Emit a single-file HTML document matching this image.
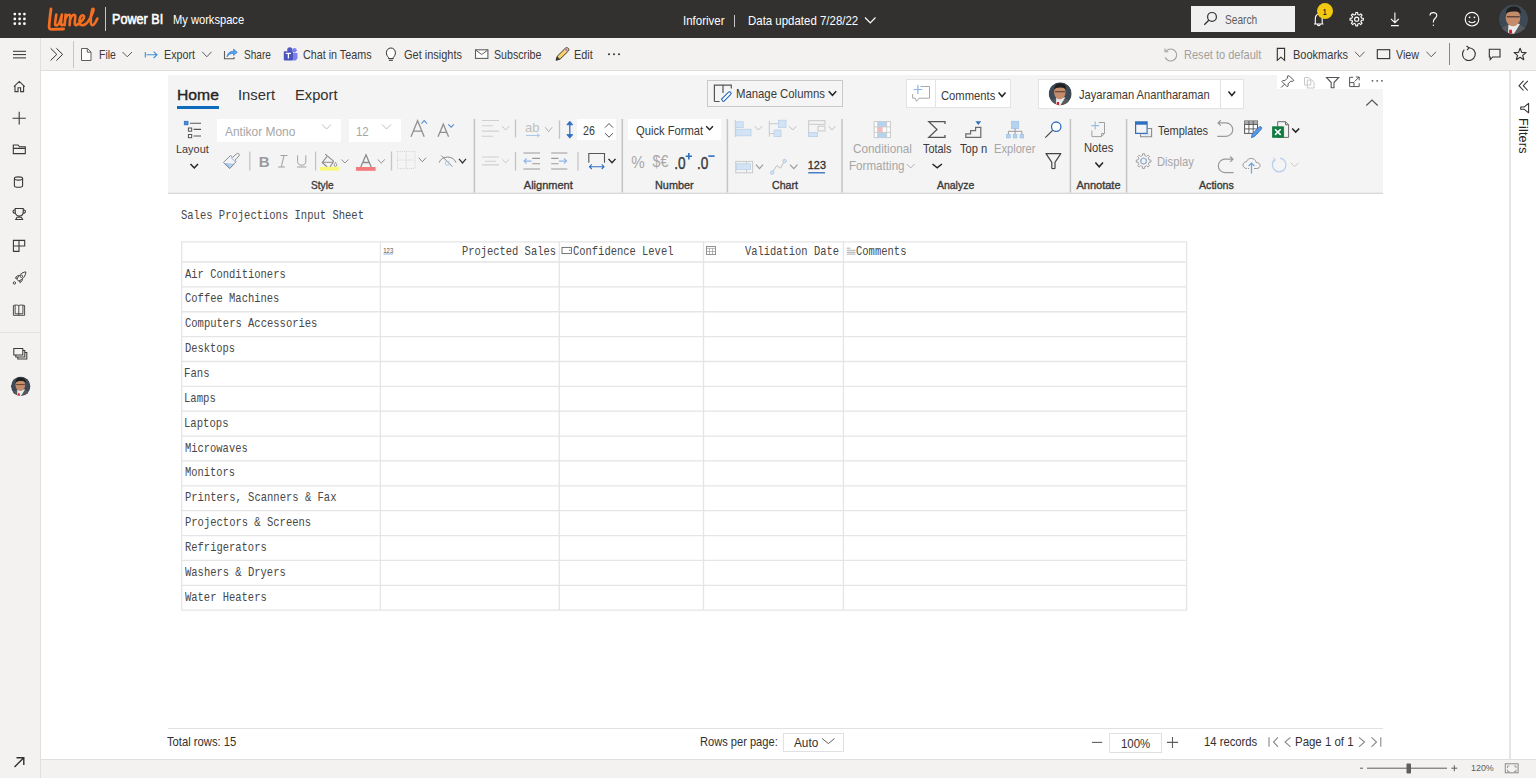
<!DOCTYPE html><html><head><meta charset="utf-8"><style>
html,body{margin:0;padding:0;}
body{width:1536px;height:778px;overflow:hidden;position:relative;background:#fff;font-family:"Liberation Sans",sans-serif;}
.a{position:absolute;}
.t{position:absolute;white-space:pre;line-height:1;transform-origin:0 0;}
</style></head><body>
<div class="a" style="left:0px;top:0px;width:1536px;height:38px;background:#323130;"></div>
<div class="a" style="left:0px;top:38px;width:1536px;height:33px;background:#f3f2f1;"></div>
<div class="a" style="left:41px;top:70px;width:1495px;height:1px;background:#e1dfdd;"></div>
<div class="a" style="left:0px;top:38px;width:40px;height:740px;background:#f3f2f1;"></div>
<div class="a" style="left:40px;top:38px;width:1px;height:740px;background:#e1dfdd;"></div>
<div class="a" style="left:41px;top:759px;width:1495px;height:19px;background:#f3f2f1;"></div>
<div class="a" style="left:41px;top:759px;width:1495px;height:1px;background:#e1dfdd;"></div>
<svg class="a" style="left:0;top:0" width="1536" height="778"><path d="M1510 71 V759" stroke="#d6d4d2" stroke-width="1.2"/></svg>
<div class="a" style="left:734px;top:15px;width:1px;height:12px;background:#c8c6c4;"></div>
<div class="a" style="left:105px;top:7px;width:1px;height:24px;background:#c8c6c4;"></div>
<div class="a" style="left:1191px;top:6px;width:104px;height:26px;background:#f0f0f0;"></div>
<div class="a" style="left:73px;top:41px;width:1px;height:27px;background:#c8c6c4;"></div>
<div class="a" style="left:1449px;top:43px;width:1px;height:22px;background:#8a8886;"></div>
<div class="a" style="left:168px;top:75px;width:1215px;height:119px;background:#f4f4f4;"></div>
<div class="a" style="left:1277px;top:75px;width:106px;height:14px;background:#ffffff;"></div>
<div class="a" style="left:168px;top:192px;width:1215px;height:1px;background:#ebebeb;"></div>
<div class="a" style="left:168px;top:193px;width:1215px;height:1px;background:#d9d9d9;"></div>
<div class="a" style="left:177px;top:106px;width:42px;height:3px;background:#0f6cbd;"></div>
<div class="a" style="left:707px;top:80px;width:136px;height:27px;background:#f5f5f5;border:1px solid #c8c8c8;box-sizing:border-box;"></div>
<div class="a" style="left:906px;top:79px;width:105px;height:29px;background:#ffffff;border:1px solid #e3e3e3;box-sizing:border-box;"></div>
<div class="a" style="left:935px;top:80px;width:1px;height:27px;background:#e3e3e3;"></div>
<div class="a" style="left:1038px;top:79px;width:206px;height:30px;background:#ffffff;border:1px solid #e3e3e3;box-sizing:border-box;"></div>
<div class="a" style="left:1220px;top:80px;width:1px;height:28px;background:#e3e3e3;"></div>
<div class="a" style="left:217px;top:119px;width:124px;height:23px;background:#ffffff;"></div>
<div class="a" style="left:349px;top:119px;width:52px;height:23px;background:#ffffff;"></div>
<div class="a" style="left:577px;top:119px;width:39px;height:21px;background:#ffffff;"></div>
<div class="a" style="left:628px;top:119px;width:93px;height:21px;background:#ffffff;"></div>
<svg class="a" style="left:0;top:0" width="1536" height="778"><path d="M181.2 241.95 H1187.1 M181.2 262.00 H1187.1 M181.2 286.87 H1187.1 M181.2 311.74 H1187.1 M181.2 336.61 H1187.1 M181.2 361.48 H1187.1 M181.2 386.35 H1187.1 M181.2 411.22 H1187.1 M181.2 436.09 H1187.1 M181.2 460.96 H1187.1 M181.2 485.83 H1187.1 M181.2 510.70 H1187.1 M181.2 535.57 H1187.1 M181.2 560.44 H1187.1 M181.2 585.31 H1187.1 M181.2 610.18 H1187.1 M181.7 241.3 V610.83 M380.4 241.3 V610.83 M559.3 241.3 V610.83 M703.5 241.3 V610.83 M843.4 241.3 V610.83 M1186.6 241.3 V610.83" stroke="#e5e5e5" stroke-width="1.3" fill="none"/></svg>
<div class="a" style="left:168px;top:728px;width:1215px;height:1px;background:#e1e1e1;"></div>
<div class="a" style="left:783px;top:733px;width:61px;height:19px;background:#ffffff;border:1px solid #e1e1e1;box-sizing:border-box;"></div>
<div class="a" style="left:1109px;top:733px;width:53px;height:20px;background:#ffffff;border:1px solid #e1e1e1;box-sizing:border-box;"></div>
<div class="a" style="left:0px;top:332px;width:40px;height:1px;background:#e1dfdd;"></div>
<div class="a" style="left:1518px;top:118.4px;width:12px;height:36px;"><div style="position:absolute;left:11px;top:0;transform:rotate(90deg);transform-origin:0 0;font:12.6px/1 'Liberation Sans';color:#252423;white-space:nowrap;letter-spacing:0.2px">Filters</div></div>
<svg class="a" style="left:0;top:0" width="1536" height="778" viewBox="0 0 1536 778"><circle cx="14.8" cy="14.1" r="1.35" stroke="none" stroke-width="1" fill="#ffffff"/><circle cx="14.8" cy="18.9" r="1.35" stroke="none" stroke-width="1" fill="#ffffff"/><circle cx="14.8" cy="23.7" r="1.35" stroke="none" stroke-width="1" fill="#ffffff"/><circle cx="19.6" cy="14.1" r="1.35" stroke="none" stroke-width="1" fill="#ffffff"/><circle cx="19.6" cy="18.9" r="1.35" stroke="none" stroke-width="1" fill="#ffffff"/><circle cx="19.6" cy="23.7" r="1.35" stroke="none" stroke-width="1" fill="#ffffff"/><circle cx="24.4" cy="14.1" r="1.35" stroke="none" stroke-width="1" fill="#ffffff"/><circle cx="24.4" cy="18.9" r="1.35" stroke="none" stroke-width="1" fill="#ffffff"/><circle cx="24.4" cy="23.7" r="1.35" stroke="none" stroke-width="1" fill="#ffffff"/><path d="M51 8.8 C50.3 14 49.6 20 49.1 26 C48.9 28.6 49.9 29.4 52 29.3 L63.6 29" stroke="#f36f21" stroke-width="2.8" fill="none" stroke-linecap="round" stroke-linejoin="round"/><path d="M56.3 14.6 C55.8 18 55.1 21.6 55.1 23.8 C55.1 26 57.2 26 58.6 24 C60 21.8 61 18 61.9 14.6 C61.5 17.6 61 21.4 61 23.8 C61 25.6 62.2 25.6 63.3 24.6" stroke="#f36f21" stroke-width="2.6" fill="none" stroke-linecap="round" stroke-linejoin="round"/><path d="M65.6 14.6 L64.6 25.2 M64.9 20.5 C66 16.8 67.5 14.7 69 14.7 C70.5 14.7 70.4 16.6 70.1 19 L69.6 25.2 M69.9 20.5 C71 16.8 72.5 14.7 74 14.7 C75.5 14.7 75.4 16.6 75.1 19 L74.7 23.4 C74.6 25.6 76.2 25.6 77.6 24.5" stroke="#f36f21" stroke-width="2.6" fill="none" stroke-linecap="round" stroke-linejoin="round"/><path d="M77.6 24.5 C79.5 23 82.8 20.6 83.9 18 C84.7 15.9 83.2 14.4 81.4 15.8 C79.6 17.3 79.1 21.2 79.6 23.4 C80.2 25.7 83.4 25.7 85.8 23.9 C87.8 22.3 90.3 18.3 91.8 14.8" stroke="#f36f21" stroke-width="2.6" fill="none" stroke-linecap="round" stroke-linejoin="round"/><path d="M91.8 14.8 C92.8 12.6 93.7 10.6 93.6 9.4 C93.5 8.4 92.6 8.6 92.2 9.6 C91.2 12.6 90.6 19 90.8 22.5 C90.9 25.5 92.8 26 94.3 24 C95.6 22.5 96.6 20.5 97.4 18.5" stroke="#f36f21" stroke-width="2.6" fill="none" stroke-linecap="round" stroke-linejoin="round"/><path d="M865 17.5 L870.25 23 L875.5 17.5" stroke="#ffffff" stroke-width="1.2" fill="none" stroke-linejoin="miter"/><circle cx="1212" cy="16.9" r="4.4" stroke="#323130" stroke-width="1.2" fill="none"/><path d="M1208.8 20.2 L1204.3 24.8" stroke="#323130" stroke-width="1.3" fill="none" /><path d="M1314 24 L1323.5 24 M1315.3 24 L1315.3 19 C1315.3 16 1316.8 14 1318.7 14 C1320.6 14 1322.2 16 1322.2 19 L1322.2 24 M1317.3 24.5 C1317.5 26 1320 26 1320.2 24.5" stroke="#ffffff" stroke-width="1.1" fill="none" /><circle cx="1325" cy="11.1" r="8" stroke="none" stroke-width="1" fill="#f2c811"/><path d="M1361.48 18.13 L1363.33 18.27 L1363.33 20.13 L1361.48 20.27 L1361.23 21.08 L1360.84 21.83 L1362.05 23.23 L1360.73 24.55 L1359.33 23.34 L1358.58 23.73 L1357.77 23.98 L1357.63 25.83 L1355.77 25.83 L1355.63 23.98 L1354.82 23.73 L1354.07 23.34 L1352.67 24.55 L1351.35 23.23 L1352.56 21.83 L1352.17 21.08 L1351.92 20.27 L1350.07 20.13 L1350.07 18.27 L1351.92 18.13 L1352.17 17.32 L1352.56 16.57 L1351.35 15.17 L1352.67 13.85 L1354.07 15.06 L1354.82 14.67 L1355.63 14.42 L1355.77 12.57 L1357.63 12.57 L1357.77 14.42 L1358.58 14.67 L1359.33 15.06 L1360.73 13.85 L1362.05 15.17 L1360.84 16.57 L1361.23 17.32 Z" stroke="#ffffff" stroke-width="1.1" fill="none" stroke-linejoin="round"/><circle cx="1356.7" cy="19.2" r="2.1" stroke="#ffffff" stroke-width="1.1" fill="none"/><path d="M1394.9 12.5 L1394.9 22.5 M1391 18.8 L1394.9 22.7 L1398.8 18.8 M1391 25.6 L1398.8 25.6" stroke="#ffffff" stroke-width="1.1" fill="none" /><path d="M1430 15.5 C1430 13.5 1431.5 12.6 1433.3 12.6 C1435.3 12.6 1436.8 13.8 1436.8 15.6 C1436.8 18 1433.4 18.6 1433.4 21.5 L1433.4 22.6" stroke="#ffffff" stroke-width="1.1" fill="none" /><circle cx="1433.4" cy="25.2" r="0.7" stroke="none" stroke-width="1" fill="#ffffff"/><circle cx="1472" cy="19.2" r="6.8" stroke="#ffffff" stroke-width="1.1" fill="none"/><circle cx="1469.6" cy="17.3" r="0.9" stroke="none" stroke-width="1" fill="#ffffff"/><circle cx="1474.4" cy="17.3" r="0.9" stroke="none" stroke-width="1" fill="#ffffff"/><path d="M1468.6 21 C1469.8 23.4 1474.2 23.4 1475.4 21" stroke="#ffffff" stroke-width="1.1" fill="none" /><clipPath id="av1"><circle cx="0" cy="0" r="14.4"/></clipPath><g clip-path="url(#av1)" transform="translate(1513.5 19.2) scale(1.0138888888888888)"><circle cx="0" cy="0" r="14.4" fill="#3d4954"/><path d="M-16 16 C-13 7 -6 5 0 5 C6 5 13 7 16 16 Z" fill="#55585c"/><path d="M-3.5 4 L3 4 L2 9 Z" fill="#b98265"/><path d="M-5 5.5 L2 5 L6.5 4.5 L-0.5 16 L-5.5 16 Z" fill="#e9e9e9"/><path d="M-4.2 10.3 L-1.6 10.3 L-1.2 16 L-4.6 16 Z" fill="#cf1f2a"/><ellipse cx="-0.5" cy="-1.6" rx="7.2" ry="8.6" fill="#c48c6b"/><path d="M-7.4 -5 C-7.8 -11 -3 -12.8 0 -12.6 C4 -12.6 7.8 -11 7.4 -5 C6.5 -8.5 -6 -8.5 -7.4 -5 Z" fill="#1f1f1f"/><path d="M-6.6 -2.4 H6.2" stroke="#3a2a22" stroke-width="1.3" opacity="0.8"/></g><path d="M13 51.3 H26 M13 54.6 H26 M13 57.9 H26" stroke="#323130" stroke-width="1" fill="none" /><path d="M50.6 48.3 L56.8 54.4 L50.6 60.5 M56.4 48.3 L62.6 54.4 L56.4 60.5" stroke="#323130" stroke-width="1" fill="none" /><path d="M81.5 48.5 L87.5 48.5 L91 52 L91 60.5 L81.5 60.5 Z" stroke="#605e5c" stroke-width="1" fill="#ffffff" /><path d="M87.3 48.5 L87.3 52.2 L91 52.2" stroke="#605e5c" stroke-width="1" fill="none" /><path d="M122.5 52 L127.25 56.8 L132 52" stroke="#605e5c" stroke-width="1" fill="none" stroke-linejoin="miter"/><path d="M145.3 52 L145.3 57.6 M146.5 54.8 L157 54.8 M153.6 51.6 L157 54.8 L153.6 58" stroke="#3a8fd6" stroke-width="1.1" fill="none" /><path d="M202.2 51.8 L206.85 56.8 L211.5 51.8" stroke="#605e5c" stroke-width="1" fill="none" stroke-linejoin="miter"/><path d="M224.5 51 L224.5 58.8 L234 58.8 L234 57" stroke="#605e5c" stroke-width="1.1" fill="none" /><path d="M227 57 C227.3 53 230 51.3 233.5 51.3 L233.5 49 L237.3 52.3 L233.5 55.6 L233.5 53.4 C230.5 53.4 228.5 54.5 227 57 Z" stroke="#2b7cd3" stroke-width="0.6" fill="#5aa0e6" /><circle cx="294.5" cy="50.3" r="2.2" stroke="none" stroke-width="1" fill="#7b83eb"/><circle cx="289.8" cy="49.8" r="2.6" stroke="none" stroke-width="1" fill="#5059c9"/><path d="M290.5 53 L297.5 53 L297.5 57.5 C297.5 59.5 296 60.6 294 60.6 C291.8 60.6 290.5 59.3 290.5 57.5 Z" stroke="none" stroke-width="0" fill="#7b83eb" /><rect x="283.8" y="51.2" width="9.2" height="9.2" rx="0.8" stroke="none" stroke-width="1" fill="#4b53bc"/><path d="M285.8 53.4 H291 M288.4 53.4 V58.6" stroke="#ffffff" stroke-width="1.3" fill="none" /><path d="M388.5 57.5 C387.2 56.2 386.4 54.6 386.4 52.7 C386.4 50 388.4 48 390.9 48 C393.4 48 395.4 50 395.4 52.7 C395.4 54.6 394.6 56.2 393.3 57.5 L393.3 58.6 L388.5 58.6 Z" stroke="#323130" stroke-width="1" fill="#ffffff" /><path d="M388.9 60.3 L392.9 60.3" stroke="#323130" stroke-width="1" fill="none" /><rect x="475.5" y="49.8" width="12.4" height="8.6" rx="0" stroke="#605e5c" stroke-width="1.1" fill="#ffffff"/><path d="M475.8 50.2 L481.7 54.5 L487.6 50.2" stroke="#605e5c" stroke-width="1" fill="none" /><path d="M556 60.3 L557.2 56.3 L565.3 48.3 C566.2 47.5 567.6 47.5 568.3 48.3 C569 49 569 50.3 568.2 51.2 L560 59.2 Z" stroke="#3b3a39" stroke-width="1" fill="#f7d26b" /><path d="M565 48.6 L567.9 51.5" stroke="#b875cf" stroke-width="1.6" fill="none" /><path d="M556 60.3 L557.2 56.3 L560 59.2 Z" stroke="none" stroke-width="0" fill="#3b3a39" /><circle cx="609" cy="54.3" r="1" stroke="none" stroke-width="1" fill="#323130"/><circle cx="614" cy="54.3" r="1" stroke="none" stroke-width="1" fill="#323130"/><circle cx="619" cy="54.3" r="1" stroke="none" stroke-width="1" fill="#323130"/><path d="M1166.2 51 A6 6 0 1 1 1165.2 57.5" stroke="#a19f9d" stroke-width="1.1" fill="none" /><path d="M1165 48.5 L1165 51.8 L1168.3 51.8" stroke="#a19f9d" stroke-width="1.1" fill="none" /><path d="M1277.3 48.4 L1284.6 48.4 L1284.6 60.3 L1280.95 57.2 L1277.3 60.3 Z" stroke="#323130" stroke-width="1.1" fill="none" /><path d="M1355 51.8 L1359.75 56.8 L1364.5 51.8" stroke="#605e5c" stroke-width="1" fill="none" stroke-linejoin="miter"/><rect x="1377.3" y="49.7" width="12.4" height="8.9" rx="0" stroke="#323130" stroke-width="1.1" fill="none"/><path d="M1426.5 51.8 L1431.25 56.8 L1436 51.8" stroke="#605e5c" stroke-width="1" fill="none" stroke-linejoin="miter"/><path d="M1464.3 49.6 A6.4 6.4 0 1 0 1468.8 47.7" stroke="#323130" stroke-width="1.1" fill="none" /><path d="M1466.5 46 L1469 47.8 L1467 50.2" stroke="#323130" stroke-width="1.1" fill="none" /><path d="M1489.3 49.2 L1500 49.2 L1500 57 L1492.6 57 L1490.2 59.6 L1490.2 57 L1489.3 57 Z" stroke="#323130" stroke-width="1.1" fill="none" /><path d="M1520.10 48.30 L1521.69 52.42 L1526.09 52.65 L1522.67 55.43 L1523.80 59.70 L1520.10 57.30 L1516.40 59.70 L1517.53 55.43 L1514.11 52.65 L1518.51 52.42 Z" stroke="#323130" stroke-width="1.1" fill="none" stroke-linejoin="round"/><path d="M13.9 86.7 L19.3 81.4 L24.7 86.7 M15 85.6 L15 91.6 L18 91.6 L18 87.8 L20.6 87.8 L20.6 91.6 L23.6 91.6 L23.6 85.6" stroke="#3b3a39" stroke-width="1.1" fill="none" /><path d="M12.6 118.3 H25.8 M19.2 111.7 V124.6" stroke="#3b3a39" stroke-width="1.1" fill="none" /><path d="M13.3 145 L18 145 L19.5 146.8 L25.3 146.8 L25.3 153.6 L13.3 153.6 Z M13.3 148.4 L25.3 148.4" stroke="#3b3a39" stroke-width="1.1" fill="none" /><ellipse cx="18.5" cy="178.5" rx="4.1" ry="1.6" stroke="#3b3a39" stroke-width="1.1" fill="none"/><path d="M14.4 178.5 L14.4 185.8 C14.4 187.8 22.6 187.8 22.6 185.8 L22.6 178.5" stroke="#3b3a39" stroke-width="1.1" fill="none" /><path d="M15.2 208.5 L23.2 208.5 L23.2 212 C23.2 214.5 21.5 216 19.2 216 C16.9 216 15.2 214.5 15.2 212 Z M15.2 209.8 C12 209.8 12.5 213.5 15.5 213.3 M23.2 209.8 C26.4 209.8 25.9 213.5 22.9 213.3 M19.2 216 L19.2 217 M15.8 219.5 L22.6 219.5 L21.4 217.3 L17 217.3 Z" stroke="#3b3a39" stroke-width="1.1" fill="none" /><path d="M13.4 240.4 L24.7 240.4 L24.7 246 L19 246 L19 251.4 L13.4 251.4 Z M13.4 246 L19 246 M19 240.4 L19 246" stroke="#3b3a39" stroke-width="1.1" fill="none" /><path d="M25.8 271.9 C22 272.2 18.6 275.3 16.9 279.3 L18.7 281.1 C22.7 279.4 25.8 276 25.8 271.9 Z" stroke="#3b3a39" stroke-width="1" fill="none" stroke-linejoin="round"/><path d="M17.4 278.2 L15.3 278.1 L17.2 275.9 L19.3 275.6 M19.8 280.6 L19.9 282.7 L22.1 280.8 L22.4 278.7" stroke="#3b3a39" stroke-width="0.95" fill="none" stroke-linejoin="round"/><circle cx="21.4" cy="276.3" r="1.2" stroke="#3b3a39" stroke-width="0.9" fill="none"/><circle cx="14.4" cy="283.0" r="1.2" stroke="#3b3a39" stroke-width="0.9" fill="none"/><path d="M13.4 315.3 V305.5 C15 304.9 17.5 304.9 18.8 305.5 C20.1 304.9 22.6 304.9 24.6 305.5 V315.3 Z M18.8 305.5 V315.3 M15.1 305.2 V313.8 H18.8 M22.9 305.2 V313.8 H18.8" stroke="#3b3a39" stroke-width="0.9" fill="none" /><path d="M13.8 348.5 L22.8 348.5 L22.8 355 L13.8 355 Z M15.8 355 L15.8 357 L24.8 357 L24.8 350.5 L22.8 350.5 M17.8 357 L17.8 359 L26.8 359 L26.8 352.5 L24.8 352.5" stroke="#3b3a39" stroke-width="1.05" fill="none" /><clipPath id="av2"><circle cx="0" cy="0" r="14.4"/></clipPath><g clip-path="url(#av2)" transform="translate(20.7 386.2) scale(0.6805555555555556)"><circle cx="0" cy="0" r="14.4" fill="#3d4954"/><path d="M-16 16 C-13 7 -6 5 0 5 C6 5 13 7 16 16 Z" fill="#55585c"/><path d="M-3.5 4 L3 4 L2 9 Z" fill="#b98265"/><path d="M-5 5.5 L2 5 L6.5 4.5 L-0.5 16 L-5.5 16 Z" fill="#e9e9e9"/><path d="M-4.2 10.3 L-1.6 10.3 L-1.2 16 L-4.6 16 Z" fill="#cf1f2a"/><ellipse cx="-0.5" cy="-1.6" rx="7.2" ry="8.6" fill="#c48c6b"/><path d="M-7.4 -5 C-7.8 -11 -3 -12.8 0 -12.6 C4 -12.6 7.8 -11 7.4 -5 C6.5 -8.5 -6 -8.5 -7.4 -5 Z" fill="#1f1f1f"/><path d="M-6.6 -2.4 H6.2" stroke="#3a2a22" stroke-width="1.3" opacity="0.8"/></g><path d="M14.5 767 L23.8 757.7 M16.5 757.7 L23.8 757.7 L23.8 765" stroke="#323130" stroke-width="1.4" fill="none" /><path d="M474.4 119 V192.5" stroke="#c4c4c4" stroke-width="1.5" fill="none" /><path d="M622.3 119 V192.5" stroke="#c4c4c4" stroke-width="1.5" fill="none" /><path d="M727.4 119 V192.5" stroke="#c4c4c4" stroke-width="1.5" fill="none" /><path d="M842.0 119 V192.5" stroke="#c4c4c4" stroke-width="1.5" fill="none" /><path d="M1070.4 119 V192.5" stroke="#c4c4c4" stroke-width="1.5" fill="none" /><path d="M1126.6 119 V192.5" stroke="#c4c4c4" stroke-width="1.5" fill="none" /><rect x="184.3" y="121.3" width="3.7" height="3.5" rx="0" stroke="#2f6fc0" stroke-width="0.8" fill="#4a8ad6"/><path d="M190 123.3 H201 M193.6 129.4 H201 M193.6 136 H201" stroke="#555555" stroke-width="1.1" fill="none" /><rect x="188.4" y="128" width="3.3" height="3.2" rx="0" stroke="#555555" stroke-width="1" fill="none"/><rect x="188.4" y="134.5" width="3.3" height="3.2" rx="0" stroke="#555555" stroke-width="1" fill="none"/><path d="M190.5 164 L194.25 168 L198 164" stroke="#252423" stroke-width="1.5" fill="none" stroke-linejoin="miter"/><path d="M223.9 162.9 L234.8 163.9 L229.7 168.4 Z" stroke="none" stroke-width="0" fill="#8fb8e8" /><path d="M227 164 L233 164.4 L229.8 167.2 Z" stroke="none" stroke-width="0" fill="#b6d3f2" /><path d="M223.4 162.5 L230.5 155.5 L232.7 157.3 L236.4 154 C237.6 152.9 239.3 153.4 239.3 154.9 C239.3 155.6 238.9 156.2 238.2 156.9 L234.9 160.2 L236.2 161.4 L229.7 168.7 Z" stroke="#8f8f8f" stroke-width="1" fill="none" stroke-linejoin="round"/><path d="M230.8 157.4 L235.2 161.6" stroke="#8fb5e6" stroke-width="1" fill="none" /><path d="M249.8 151.5 V170.5" stroke="#c4c4c4" stroke-width="1.3" fill="none" /><path d="M315.6 151.5 V170.5" stroke="#c4c4c4" stroke-width="1.3" fill="none" /><path d="M391.5 151.5 V170.5" stroke="#c4c4c4" stroke-width="1.3" fill="none" /><text x="258.8" y="167" font-family="Liberation Sans" font-weight="bold" font-size="15" fill="#9a9a9a">B</text><path d="M280.5 155.5 H287.5 M278 167 H285 M284 155.5 L281.3 167" stroke="#a0a0a0" stroke-width="1" fill="none" /><path d="M297.6 155.4 V161.5 C297.6 164 299.4 165.2 301.7 165.2 C304 165.2 305.8 164 305.8 161.5 V155.4 M297 167 H306.4" stroke="#a0a0a0" stroke-width="1" fill="none" /><path d="M325.2 154.2 L333.8 161.3 M326.9 156.6 L322.2 162.5 L327.2 167 M333.8 161.3 L330 167 M322.4 162.3 H333" stroke="#8a8a8a" stroke-width="1.1" fill="none" stroke-linejoin="round"/><path d="M335.5 162.4 C335.5 162.4 334.2 164.2 334.2 165.1 C334.2 165.9 334.8 166.4 335.5 166.4 C336.2 166.4 336.8 165.9 336.8 165.1 C336.8 164.2 335.5 162.4 335.5 162.4 Z" stroke="#8a8a8a" stroke-width="0.9" fill="none" /><rect x="320.1" y="166.9" width="19.1" height="3.7" rx="0" stroke="none" stroke-width="1" fill="#f8f878"/><path d="M341.4 159.5 L344.9 163 L348.4 159.5" stroke="#909090" stroke-width="1" fill="none" stroke-linejoin="miter"/><path d="M360.8 167 L366 154.8 L371.2 167 M362.7 162.5 H369.3" stroke="#8a8a8a" stroke-width="1.3" fill="none" /><rect x="356" y="167" width="19.6" height="3.8" rx="0" stroke="none" stroke-width="1" fill="#f47b7b"/><path d="M377.7 159.5 L381.25 163 L384.8 159.5" stroke="#909090" stroke-width="1" fill="none" stroke-linejoin="miter"/><g stroke="#c4c4c4" stroke-width="0.9" stroke-dasharray="0.8 1.4" fill="none"><rect x="397.5" y="151.5" width="17.5" height="17"/><path d="M406.2 151.5 V168.5 M397.5 160 H415"/></g><path d="M418.75 157.7 L422.375 161.8 L426 157.7" stroke="#8a8a8a" stroke-width="1" fill="none" stroke-linejoin="miter"/><path d="M439.1 162.6 C441.6 155.2 453.5 155.2 456 162.6" stroke="#8a8a8a" stroke-width="1" fill="none" /><path d="M441.3 155.6 L452.3 166.6" stroke="#8a8a8a" stroke-width="1" fill="none" /><circle cx="447.3" cy="163.3" r="2" stroke="#a9c8ec" stroke-width="1" fill="none"/><path d="M459 158.8 L462.5 163 L466 158.8" stroke="#323130" stroke-width="1.2" fill="none" stroke-linejoin="miter"/><path d="M411 136.8 L417.6 120.8 L424.2 136.8 M413.2 131.2 H422" stroke="#8f8f8f" stroke-width="1.3" fill="none" /><path d="M421.4 123.6 L424.2 120.6 L427 123.6" stroke="#5a8fd6" stroke-width="1.1" fill="none" /><path d="M438 136.8 L443.3 124.2 L448.6 136.8 M439.8 132.4 H446.8" stroke="#8f8f8f" stroke-width="1.3" fill="none" /><path d="M448.3 124.4 L451.1 127.2 L453.9 124.4" stroke="#5a8fd6" stroke-width="1.1" fill="none" /><path d="M322 124.5 L326.5 129 L331 124.5" stroke="#bdbdbd" stroke-width="1" fill="none" stroke-linejoin="miter"/><path d="M382 124.5 L386.5 129 L391 124.5" stroke="#bdbdbd" stroke-width="1" fill="none" stroke-linejoin="miter"/><path d="M481.9 120.5 H499 M481.9 125.8 H493 M481.9 131.1 H499 M481.9 136.3 H493" stroke="#d0d0d0" stroke-width="1.1" fill="none" /><path d="M502.2 126.2 L505.7 130.1 L509.2 126.2" stroke="#c8c8c8" stroke-width="1" fill="none" stroke-linejoin="miter"/><path d="M515.5 119.4 V137.4" stroke="#c4c4c4" stroke-width="1.3" fill="none" /><path d="M559.5 120.3 V138.9" stroke="#c4c4c4" stroke-width="1.3" fill="none" /><path d="M515.5 152 V170.6" stroke="#c4c4c4" stroke-width="1.3" fill="none" /><path d="M578 152 V170.6" stroke="#c4c4c4" stroke-width="1.3" fill="none" /><text x="525" y="132.2" font-family="Liberation Sans" font-size="13" fill="#c0c0c0">ab</text><path d="M526 135.5 H539.5 M537 133.6 L539.5 135.5 L537 137.4" stroke="#a9c8ec" stroke-width="1" fill="none" /><path d="M545.1 127.2 L548.6500000000001 131.6 L552.2 127.2" stroke="#b0b0b0" stroke-width="1" fill="none" stroke-linejoin="miter"/><path d="M569.8 123 V136.5" stroke="#2f6fc0" stroke-width="1.3" fill="none" /><path d="M566.8 124.8 L569.8 121.2 L572.8 124.8 Z M566.8 134.6 L569.8 138.2 L572.8 134.6 Z" stroke="#2f6fc0" stroke-width="0.8" fill="#2f6fc0" /><path d="M605 127.6 L609 123.5 L613 127.6 M605 133.1 L609 137.2 L613 133.1" stroke="#555" stroke-width="1" fill="none" /><path d="M481.9 157 H499 M485 161.2 H496 M481.9 164.9 H499" stroke="#d0d0d0" stroke-width="1.1" fill="none" /><path d="M502.2 159.4 L505.7 162.8 L509.2 159.4" stroke="#c8c8c8" stroke-width="1" fill="none" stroke-linejoin="miter"/><path d="M523.4 153 H540 M532.2 158.4 H540 M532.2 163.8 H540 M523.4 169 H540" stroke="#9a9a9a" stroke-width="1.1" fill="none" /><path d="M524 161.1 H531.5 M526.6 158.5 L524 161.1 L526.6 163.7" stroke="#8fb5e6" stroke-width="1.1" fill="none" /><path d="M551.2 153 H567.3 M551.2 158.4 H558.5 M551.2 163.8 H558.5 M551.2 169 H567.3" stroke="#9a9a9a" stroke-width="1.1" fill="none" /><path d="M559 161.1 H566.6 M564 158.5 L566.6 161.1 L564 163.7" stroke="#8fb5e6" stroke-width="1.1" fill="none" /><path d="M588.8 162.8 V153.5 H604.5 V162.8" stroke="#555" stroke-width="1.1" fill="none" /><path d="M589.5 166.7 H604 M591.8 164.4 L589.5 166.7 L591.8 169 M601.7 164.4 L604 166.7 L601.7 169" stroke="#2f6fc0" stroke-width="1.1" fill="none" /><path d="M608.5 158.9 L612.0 162.8 L615.5 158.9" stroke="#252423" stroke-width="1.4" fill="none" stroke-linejoin="miter"/><path d="M706.2 126.3 L709.6 129.8 L713 126.3" stroke="#252423" stroke-width="1.4" fill="none" stroke-linejoin="miter"/><text x="631.3" y="167.6" font-family="Liberation Sans" font-size="16.5" fill="#a8a8a8" transform="translate(631.3 0) scale(0.92 1) translate(-631.3 0)">%</text><text x="652.5" y="167.2" font-family="Liberation Sans" font-size="16.5" fill="#a8a8a8" transform="translate(652.5 0) scale(0.86 1) translate(-652.5 0)">$€</text><text x="674.3" y="168.6" font-family="Liberation Sans" font-size="16" fill="#3b3b3b" stroke="#3b3b3b" stroke-width="0.4" transform="translate(674.3 0) scale(0.85 1) translate(-674.3 0)">.0</text><path d="M685.7 156.2 H692 M688.85 153 V159.5" stroke="#2f6fc0" stroke-width="1.6" fill="none" /><text x="697.1" y="168.6" font-family="Liberation Sans" font-size="16" fill="#3b3b3b" stroke="#3b3b3b" stroke-width="0.4" transform="translate(697.1 0) scale(0.85 1) translate(-697.1 0)">.0</text><path d="M708.3 156.1 H714.6" stroke="#2f6fc0" stroke-width="1.6" fill="none" /><path d="M735.3 120.2 V137" stroke="#c8c8c8" stroke-width="1" fill="none" /><rect x="735.8" y="121.8" width="7.4" height="5.8" rx="0" stroke="#b9d1ec" stroke-width="0.8" fill="#d3e3f4"/><rect x="735.8" y="129.2" width="15.2" height="6.6" rx="0" stroke="#b9d1ec" stroke-width="0.8" fill="#d3e3f4"/><path d="M754.7 126.3 L758.4000000000001 130 L762.1 126.3" stroke="#c0c0c0" stroke-width="1" fill="none" stroke-linejoin="miter"/><path d="M769.3 120.6 V136.6 M769.3 123.7 H778.5 M769.3 133.6 H774" stroke="#c8c8c8" stroke-width="1" fill="none" /><rect x="778.5" y="120.2" width="7.5" height="7.4" rx="0" stroke="#b9d1ec" stroke-width="0.8" fill="#d3e3f4"/><rect x="774" y="130" width="7" height="6.6" rx="0" stroke="#b9d1ec" stroke-width="0.8" fill="#d3e3f4"/><path d="M789.2 126.3 L792.7 130 L796.2 126.3" stroke="#c0c0c0" stroke-width="1" fill="none" stroke-linejoin="miter"/><rect x="808.7" y="120.7" width="16.3" height="3.6" rx="0" stroke="#c8c8c8" stroke-width="1" fill="none"/><path d="M808.7 124.3 V137" stroke="#c8c8c8" stroke-width="1" fill="none" /><rect x="818" y="126.2" width="7" height="4.7" rx="0" stroke="#c8c8c8" stroke-width="1" fill="none"/><rect x="808.7" y="132.5" width="8.9" height="4.1" rx="0" stroke="#b9d1ec" stroke-width="0.8" fill="#d3e3f4"/><path d="M828.7 126.3 L832.0 130 L835.3 126.3" stroke="#c0c0c0" stroke-width="1" fill="none" stroke-linejoin="miter"/><rect x="735.8" y="161.4" width="16.8" height="11.4" rx="0" stroke="#c8c8c8" stroke-width="1" fill="none"/><rect x="736.3" y="163.8" width="14.2" height="5.7" rx="0" stroke="#b9d1ec" stroke-width="0.8" fill="#d3e3f4"/><path d="M746.5 161.4 V163.8 M746.5 169.5 V172.8" stroke="#c8c8c8" stroke-width="1" fill="none" /><path d="M756 164.6 L759.5 168.7 L763 164.6" stroke="#9a9a9a" stroke-width="1.1" fill="none" stroke-linejoin="miter"/><path d="M773 171.5 L776.8 165.6 L780.6 168.2 L783.7 162.3" stroke="#c0c0c0" stroke-width="1" fill="none" /><circle cx="772.2" cy="172.6" r="1.7" stroke="#a9c8ec" stroke-width="0.9" fill="#d3e3f4"/><circle cx="784.6" cy="161" r="1.7" stroke="#a9c8ec" stroke-width="0.9" fill="#d3e3f4"/><path d="M790 164.6 L793.75 168.7 L797.5 164.6" stroke="#9a9a9a" stroke-width="1.1" fill="none" stroke-linejoin="miter"/><text x="807.8" y="169.3" font-family="Liberation Sans" font-size="11.6" fill="#333" stroke="#333" stroke-width="0.35" transform="translate(807.8 0) scale(0.94 1) translate(-807.8 0)">123</text><rect x="808.2" y="172" width="16.8" height="1.5" rx="0" stroke="none" stroke-width="1" fill="#4a7fc8"/><rect x="874.2" y="121.6" width="16.2" height="16" rx="0" stroke="#c8c8c8" stroke-width="1" fill="#ffffff"/><rect x="877.7" y="121.6" width="9" height="5.3" rx="0" stroke="none" stroke-width="1" fill="#b5d3f0"/><rect x="877.7" y="132.4" width="9" height="5.2" rx="0" stroke="none" stroke-width="1" fill="#b5d3f0"/><rect x="877.7" y="126.9" width="4.9" height="5.5" rx="0" stroke="none" stroke-width="1" fill="#f6b9bc"/><path d="M874.2 126.9 H890.4 M874.2 132.4 H890.4 M877.7 121.6 V137.6 M886.7 121.6 V137.6" stroke="#c8c8c8" stroke-width="0.9" fill="none" /><path d="M906.7 164 L910.6 168 L914.5 164" stroke="#b0b0b0" stroke-width="1" fill="none" stroke-linejoin="miter"/><path d="M945 124 V121.6 H928.8 L937 129.5 L928.8 137.4 H945 V135" stroke="#555" stroke-width="1.3" fill="none" /><path d="M932.5 164 L937.2 167.8 L941.9 164" stroke="#252423" stroke-width="1.5" fill="none" stroke-linejoin="miter"/><path d="M965.8 137.4 V133.8 H970.6 V130.6 H975.6 V127.4 H980.8 V137.4 Z" stroke="#6a6a6a" stroke-width="1.2" fill="none" /><path d="M975.4 121.3 H981.2 L978.3 125 Z" stroke="none" stroke-width="0" fill="#2f6fc0" /><rect x="1011.5" y="121.3" width="7.2" height="7.2" rx="0" stroke="#9ec3e8" stroke-width="0.8" fill="#b5d3f0"/><path d="M1015.1 128.5 V131.3 M1008.4 134.4 V131.3 H1021.9 V134.4 M1015.1 131.3 V134.4" stroke="#9a9a9a" stroke-width="1" fill="none" /><rect x="1006.6" y="134.5" width="3.6" height="3.4" rx="0" stroke="#9ec3e8" stroke-width="0.8" fill="#b5d3f0"/><rect x="1013.3000000000001" y="134.5" width="3.6" height="3.4" rx="0" stroke="#9ec3e8" stroke-width="0.8" fill="#b5d3f0"/><rect x="1020.1" y="134.5" width="3.6" height="3.4" rx="0" stroke="#9ec3e8" stroke-width="0.8" fill="#b5d3f0"/><circle cx="1056.2" cy="126.7" r="4.7" stroke="#2f6fc0" stroke-width="1.3" fill="#ffffff"/><path d="M1052.6 130.4 L1045.3 137.6" stroke="#444" stroke-width="1.2" fill="none" /><path d="M1046 153.6 H1060.8 L1055 162.3 V168.3 C1055 168.7 1051.8 168.7 1051.8 168.3 V162.3 Z" stroke="#444" stroke-width="1.2" fill="none" stroke-linejoin="round"/><path d="M1091.2 125.6 H1099.2 M1095.2 121.6 V129.6" stroke="#9cbde6" stroke-width="1.2" fill="none" /><path d="M1098.6 122.5 H1104.5 V133.5 L1101.5 136.6 H1091.9 V130.5 M1104.5 133.5 H1101.5 V136.6" stroke="#a0a0a0" stroke-width="1" fill="none" /><path d="M1095.4 162.4 L1099.2 166.8 L1103 162.4" stroke="#252423" stroke-width="1.5" fill="none" stroke-linejoin="miter"/><rect x="1135.6" y="121.9" width="11.5" height="11.5" rx="0" stroke="#2f6fc0" stroke-width="1.2" fill="none"/><rect x="1135.6" y="121.9" width="11.5" height="2.8" rx="0" stroke="none" stroke-width="1" fill="#2f6fc0"/><path d="M1140.6 133.6 V136.8 H1151.6 V128.5 H1147.4" stroke="#8a8a8a" stroke-width="1.1" fill="none" /><g stroke="#a9c8ec" stroke-width="0.8" stroke-dasharray="0.8 1"><path d="M1143 134.5 H1150.5 M1148 130 V136 M1145 132 V136"/></g><path d="M1148.97 159.90 L1150.93 160.07 L1150.93 162.13 L1148.97 162.30 L1148.68 163.20 L1148.24 164.05 L1149.51 165.55 L1148.05 167.01 L1146.55 165.74 L1145.70 166.18 L1144.80 166.47 L1144.63 168.43 L1142.57 168.43 L1142.40 166.47 L1141.50 166.18 L1140.65 165.74 L1139.15 167.01 L1137.69 165.55 L1138.96 164.05 L1138.52 163.20 L1138.23 162.30 L1136.27 162.13 L1136.27 160.07 L1138.23 159.90 L1138.52 159.00 L1138.96 158.15 L1137.69 156.65 L1139.15 155.19 L1140.65 156.46 L1141.50 156.02 L1142.40 155.73 L1142.57 153.77 L1144.63 153.77 L1144.80 155.73 L1145.70 156.02 L1146.55 156.46 L1148.05 155.19 L1149.51 156.65 L1148.24 158.15 L1148.68 159.00 Z" stroke="#a0a0a0" stroke-width="1" fill="none" stroke-linejoin="round"/><circle cx="1143.6" cy="161.1" r="3" stroke="#a0a0a0" stroke-width="1" fill="none"/><circle cx="1143.6" cy="161.1" r="2.8" stroke="#8fb5e6" stroke-width="1" fill="none"/><path d="M1218 122.9 H1226 A6.75 6.75 0 0 1 1226 136.4 H1217.2 M1220.8 120.2 L1218 122.9 L1220.8 125.6" stroke="#9a9a9a" stroke-width="1.2" fill="none" /><path d="M1233 159.2 H1225 A6.7 6.7 0 0 0 1225 172.6 H1233.6 M1230.2 156.5 L1233 159.2 L1230.2 161.9" stroke="#9a9a9a" stroke-width="1.2" fill="none" /><rect x="1244.6" y="121" width="12.9" height="12.4" rx="0" stroke="#555" stroke-width="1" fill="#ffffff"/><rect x="1244.6" y="121" width="12.9" height="3.4" rx="0" stroke="none" stroke-width="1" fill="#a8a8a8"/><path d="M1244.6 124.5 H1257.5 M1244.6 128.9 H1257.5 M1248.9 121 V133.4 M1253.2 121 V133.4" stroke="#555" stroke-width="0.9" fill="none" /><path d="M1251.5 137.6 L1252.2 134.2 L1258.8 127.3 C1259.6 126.5 1260.8 126.5 1261.3 127.1 C1261.9 127.7 1261.8 128.7 1261 129.5 L1254.5 136.4 Z" stroke="#2f6fc0" stroke-width="0.9" fill="#5a9ae6" /><path d="M1277.7 121.7 H1285.5 L1288.6 124.8 V137.4 H1277.7 Z M1285.5 121.7 V124.8 H1288.6 M1283.6 126.8 V137.4" stroke="#6a6a6a" stroke-width="1" fill="none" /><rect x="1272.1" y="126.3" width="11.5" height="11.5" rx="0" stroke="none" stroke-width="1" fill="#107c41"/><path d="M1275 129.2 L1280.7 134.9 M1280.7 129.2 L1275 134.9" stroke="#ffffff" stroke-width="1.6" fill="none" /><path d="M1292.2 128.4 L1295.7 132.1 L1299.2 128.4" stroke="#252423" stroke-width="1.5" fill="none" stroke-linejoin="miter"/><path d="M1247 168.5 C1244.5 168.5 1243 167 1243 165 C1243 163 1244.6 161.6 1246.5 161.8 C1247 159.5 1249 158.4 1251.3 158.4 C1254 158.4 1255.8 160.2 1256.2 162.5 C1258.3 162.4 1260 163.6 1260 165.5 C1260 167.3 1258.6 168.5 1256.8 168.5 H1254" stroke="#9a9a9a" stroke-width="1" fill="none" /><path d="M1248 168.5 H1249" stroke="#9a9a9a" stroke-width="1" fill="none" /><path d="M1251.5 173.5 V163.3 M1248.6 166 L1251.5 163.1 L1254.4 166" stroke="#6fa1e0" stroke-width="1.2" fill="none" /><path d="M1275 159.6 A6.8 6.8 0 1 0 1280 158.2" stroke="#b8cfee" stroke-width="1.3" fill="none" /><path d="M1273.5 157.8 L1275.2 160 L1272.8 161.5" stroke="#b8cfee" stroke-width="1.1" fill="none" /><path d="M1291 162.9 L1294.7 166.6 L1298.4 162.9" stroke="#c8c8c8" stroke-width="1" fill="none" stroke-linejoin="miter"/><path d="M714.4 101.5 V85.1 H731.3 V88.5 M714.4 101.5 H719.6 M723 85.1 V93" stroke="#555" stroke-width="1.2" fill="none" /><path d="M722.6 101 L721.6 99.2 L728.3 92.4 C729 91.7 730.2 91.7 730.7 92.3 C731.3 92.9 731.2 93.9 730.5 94.6 L723.8 101.4 Z" stroke="#2f6fc0" stroke-width="1.2" fill="#ffffff" /><path d="M828.7 91.3 L832.45 95.3 L836.2 91.3" stroke="#252423" stroke-width="1.5" fill="none" stroke-linejoin="miter"/><path d="M913.5 89.5 H922.3 M917.9 85.1 V93.9" stroke="#8fb5e6" stroke-width="1.2" fill="none" /><path d="M920.5 86.5 H929.5 V98.2 H919 L916.6 101.3 L915.3 98.2 H912.6 V94" stroke="#a8a8a8" stroke-width="1" fill="none" /><path d="M998.6 92.5 L1002.05 96.5 L1005.5 92.5" stroke="#252423" stroke-width="1.5" fill="none" stroke-linejoin="miter"/><clipPath id="av3"><circle cx="0" cy="0" r="14.4"/></clipPath><g clip-path="url(#av3)" transform="translate(1060.2 93.65) scale(0.798611111111111)"><circle cx="0" cy="0" r="14.4" fill="#3d4954"/><path d="M-16 16 C-13 7 -6 5 0 5 C6 5 13 7 16 16 Z" fill="#55585c"/><path d="M-3.5 4 L3 4 L2 9 Z" fill="#b98265"/><path d="M-5 5.5 L2 5 L6.5 4.5 L-0.5 16 L-5.5 16 Z" fill="#e9e9e9"/><path d="M-4.2 10.3 L-1.6 10.3 L-1.2 16 L-4.6 16 Z" fill="#cf1f2a"/><ellipse cx="-0.5" cy="-1.6" rx="7.2" ry="8.6" fill="#c48c6b"/><path d="M-7.4 -5 C-7.8 -11 -3 -12.8 0 -12.6 C4 -12.6 7.8 -11 7.4 -5 C6.5 -8.5 -6 -8.5 -7.4 -5 Z" fill="#1f1f1f"/><path d="M-6.6 -2.4 H6.2" stroke="#3a2a22" stroke-width="1.3" opacity="0.8"/></g><path d="M1228.5 91.5 L1231.85 95.5 L1235.2 91.5" stroke="#252423" stroke-width="1.5" fill="none" stroke-linejoin="miter"/><rect x="1278" y="75" width="19" height="14" rx="0" stroke="none" stroke-width="1" fill="#ffffff"/><rect x="1300" y="75" width="19" height="14" rx="0" stroke="none" stroke-width="1" fill="#ffffff"/><rect x="1323" y="75" width="19" height="14" rx="0" stroke="none" stroke-width="1" fill="#ffffff"/><rect x="1345" y="75" width="19" height="14" rx="0" stroke="none" stroke-width="1" fill="#ffffff"/><path d="M1289.2 75.8 L1293.9 80.5 L1292.6 81.4 L1290.8 81.1 L1288 83.9 L1288.2 85.9 L1287.2 86.8 L1281.9 81.5 L1282.8 80.5 L1284.8 80.7 L1287.6 77.9 L1287.3 76.1 Z M1284.6 84.1 L1281.2 87.5" stroke="#555" stroke-width="1" fill="none" stroke-linejoin="round"/><path d="M1304.5 77.5 H1308.8 L1310.8 79.5 V85 H1304.5 Z M1307.3 80 H1311.8 L1314 82.2 V88 H1307.3 Z" stroke="#c8c8c8" stroke-width="1" fill="#ffffff" /><path d="M1326.5 77.5 H1338.7 L1334 82.5 V87.7 H1331.2 V82.5 Z" stroke="#555" stroke-width="1.1" fill="none" /><path d="M1353.2 77.3 H1349.6 V86.6 H1359.2 V83.2 M1349.6 82.6 H1354 V86.6 M1354.6 81.6 L1359.2 77 M1355.9 77 H1359.2 V80.3" stroke="#555" stroke-width="1" fill="none" /><circle cx="1372.5" cy="80.8" r="0.9" stroke="none" stroke-width="1" fill="#555"/><circle cx="1377.2" cy="80.8" r="0.9" stroke="none" stroke-width="1" fill="#555"/><circle cx="1381.9" cy="80.8" r="0.9" stroke="none" stroke-width="1" fill="#555"/><path d="M1366.3 105.5 L1372 100 L1377.7 105.5" stroke="#555" stroke-width="1.2" fill="none" /><text x="383.2" y="252.8" font-family="Liberation Sans" font-size="7.4" fill="#555" transform="translate(383.2 0) scale(0.82 1) translate(-383.2 0)">123</text><path d="M383.4 254 H393.1" stroke="#9fc0ea" stroke-width="1.2" fill="none" /><rect x="562" y="247.4" width="9.4" height="6.2" rx="0" stroke="#666" stroke-width="0.9" fill="none"/><path d="M569 250.2 H570.5" stroke="#666" stroke-width="0.9" fill="none" /><rect x="706.5" y="246.5" width="9" height="8" rx="0" stroke="#888" stroke-width="0.9" fill="none"/><path d="M706.5 248.4 H715.5 M709.5 248.4 V254.5 M712.5 248.4 V254.5 M706.5 251.5 H715.5" stroke="#999" stroke-width="0.7" fill="none" /><path d="M846.8 248.2 H850.5 M846.8 250.3 H855.5 M846.8 252.3 H855.5 M846.8 254.1 H855.5" stroke="#777" stroke-width="0.6" fill="none" /><path d="M822.2 738.5 L828.35 743.6 L834.5 738.5" stroke="#605e5c" stroke-width="1" fill="none" stroke-linejoin="miter"/><path d="M1092 742.4 H1102.2" stroke="#605e5c" stroke-width="1.1" fill="none" /><path d="M1167 742.4 H1178 M1172.5 737 V748" stroke="#605e5c" stroke-width="1.1" fill="none" /><path d="M1269 737.3 V746.8 M1278 737.3 L1273.5 742 L1278 746.8" stroke="#8a8886" stroke-width="1.1" fill="none" /><path d="M1290.5 737.3 L1285 742 L1290.5 746.8" stroke="#8a8886" stroke-width="1.1" fill="none" /><path d="M1359 737.3 L1364.5 742 L1359 746.8" stroke="#8a8886" stroke-width="1.1" fill="none" /><path d="M1371.5 737.3 L1376.5 742 L1371.5 746.8 M1380.8 737.3 V746.8" stroke="#8a8886" stroke-width="1.1" fill="none" /><path d="M1523.5 80.8 L1519 85.7 L1523.5 90.5 M1527.8 80.8 L1523.3 85.7 L1527.8 90.5" stroke="#323130" stroke-width="1.05" fill="none" /><path d="M1528.6 103.4 V112.8 L1524.3 109.3 H1520.7 V106.9 H1524.3 Z" stroke="#323130" stroke-width="1.05" fill="none" stroke-linejoin="round"/><path d="M1360 768.2 H1363 M1367 768.2 H1447 M1451.3 768.2 H1457.3 M1454.3 765.2 V771.2" stroke="#605e5c" stroke-width="1" fill="none" /><rect x="1406.5" y="763.5" width="4.5" height="10" rx="0.8" stroke="none" stroke-width="1" fill="#605e5c"/><rect x="1505.3" y="763.8" width="12.8" height="9" rx="0" stroke="#8a8886" stroke-width="1" fill="none"/><path d="M1507.5 766 L1509.5 766 M1507.5 766 V768 M1516 766 H1514 M1516 766 V768 M1507.5 771.5 H1509.5 M1507.5 771.5 V769.5 M1516 771.5 H1514 M1516 771.5 V769.5" stroke="#8a8886" stroke-width="0.8" fill="none" /></svg>
<div class="t" style="left:112.08px;top:13px;font-family:'Liberation Sans';font-size:13.77px;color:#ffffff;-webkit-text-stroke:0.55px #ffffff;transform:scaleX(0.9163);">Power BI</div>
<div class="t" style="left:173.15px;top:13px;font-family:'Liberation Sans';font-size:13.04px;color:#ffffff;transform:scaleX(0.8533);">My workspace</div>
<div class="t" style="left:683.34px;top:14px;font-family:'Liberation Sans';font-size:13.33px;color:#ffffff;transform:scaleX(0.8615);">Inforiver</div>
<div class="t" style="left:747.89px;top:14px;font-family:'Liberation Sans';font-size:13.33px;color:#ffffff;transform:scaleX(0.8593);">Data updated 7/28/22</div>
<div class="t" style="left:1225.20px;top:13px;font-family:'Liberation Sans';font-size:13.04px;color:#605e5c;transform:scaleX(0.7797);">Search</div>
<div class="t" style="left:98.96px;top:49px;font-family:'Liberation Sans';font-size:12.46px;color:#3b3a39;transform:scaleX(0.8412);">File</div>
<div class="t" style="left:163.54px;top:49px;font-family:'Liberation Sans';font-size:12.46px;color:#3b3a39;transform:scaleX(0.8612);">Export</div>
<div class="t" style="left:244.00px;top:49px;font-family:'Liberation Sans';font-size:12.46px;color:#3b3a39;transform:scaleX(0.8107);">Share</div>
<div class="t" style="left:303.40px;top:49px;font-family:'Liberation Sans';font-size:12.46px;color:#3b3a39;transform:scaleX(0.8631);">Chat in Teams</div>
<div class="t" style="left:404.20px;top:49px;font-family:'Liberation Sans';font-size:12.46px;color:#3b3a39;transform:scaleX(0.8820);">Get insights</div>
<div class="t" style="left:494.40px;top:49px;font-family:'Liberation Sans';font-size:12.46px;color:#3b3a39;transform:scaleX(0.8548);">Subscribe</div>
<div class="t" style="left:573.73px;top:49px;font-family:'Liberation Sans';font-size:12.46px;color:#3b3a39;transform:scaleX(0.8715);">Edit</div>
<div class="t" style="left:1293.12px;top:49px;font-family:'Liberation Sans';font-size:12.46px;color:#3b3a39;transform:scaleX(0.8844);">Bookmarks</div>
<div class="t" style="left:1396.30px;top:49px;font-family:'Liberation Sans';font-size:12.46px;color:#3b3a39;transform:scaleX(0.8605);">View</div>
<div class="t" style="left:1183.51px;top:49px;font-family:'Liberation Sans';font-size:12.46px;color:#a19f9d;transform:scaleX(0.8863);">Reset to default</div>
<div class="t" style="left:176.94px;top:88px;font-family:'Liberation Sans';font-size:14.78px;color:#252423;-webkit-text-stroke:0.35px #252423;transform:scaleX(1.0635);">Home</div>
<div class="t" style="left:237.77px;top:87px;font-family:'Liberation Sans';font-size:15.07px;color:#323130;transform:scaleX(0.9830);">Insert</div>
<div class="t" style="left:294.82px;top:87px;font-family:'Liberation Sans';font-size:15.07px;color:#323130;transform:scaleX(0.9758);">Export</div>
<div class="t" style="left:735.85px;top:87px;font-family:'Liberation Sans';font-size:13.33px;color:#3b3a39;transform:scaleX(0.8507);">Manage Columns</div>
<div class="t" style="left:941.20px;top:89px;font-family:'Liberation Sans';font-size:13.04px;color:#3b3a39;transform:scaleX(0.8616);">Comments</div>
<div class="t" style="left:1079.25px;top:88px;font-family:'Liberation Sans';font-size:13.33px;color:#3b3a39;transform:scaleX(0.8359);">Jayaraman Anantharaman</div>
<div class="t" style="left:310.60px;top:180px;font-family:'Liberation Sans';font-size:11.01px;color:#3b3a39;-webkit-text-stroke:0.35px #3b3a39;transform:scaleX(0.9204);">Style</div>
<div class="t" style="left:523.80px;top:180px;font-family:'Liberation Sans';font-size:11.01px;color:#3b3a39;-webkit-text-stroke:0.35px #3b3a39;">Alignment</div>
<div class="t" style="left:655.30px;top:180px;font-family:'Liberation Sans';font-size:11.01px;color:#3b3a39;-webkit-text-stroke:0.35px #3b3a39;transform:scaleX(0.9883);">Number</div>
<div class="t" style="left:771.90px;top:180px;font-family:'Liberation Sans';font-size:11.01px;color:#3b3a39;-webkit-text-stroke:0.35px #3b3a39;transform:scaleX(0.9612);">Chart</div>
<div class="t" style="left:937.00px;top:180px;font-family:'Liberation Sans';font-size:11.01px;color:#3b3a39;-webkit-text-stroke:0.35px #3b3a39;transform:scaleX(0.9509);">Analyze</div>
<div class="t" style="left:1076.50px;top:180px;font-family:'Liberation Sans';font-size:11.01px;color:#3b3a39;-webkit-text-stroke:0.35px #3b3a39;">Annotate</div>
<div class="t" style="left:1199.00px;top:180px;font-family:'Liberation Sans';font-size:11.01px;color:#3b3a39;-webkit-text-stroke:0.35px #3b3a39;transform:scaleX(0.9652);">Actions</div>
<div class="t" style="left:176.40px;top:143px;font-family:'Liberation Sans';font-size:11.74px;color:#3b3a39;transform:scaleX(0.9285);">Layout</div>
<div class="t" style="left:224.70px;top:125px;font-family:'Liberation Sans';font-size:13.04px;color:#a6a6a6;transform:scaleX(0.9160);">Antikor Mono</div>
<div class="t" style="left:356.12px;top:125px;font-family:'Liberation Sans';font-size:13.04px;color:#a6a6a6;transform:scaleX(0.8756);">12</div>
<div class="t" style="left:583.40px;top:125px;font-family:'Liberation Sans';font-size:12.46px;color:#3b3a39;transform:scaleX(0.8545);">26</div>
<div class="t" style="left:635.90px;top:125px;font-family:'Liberation Sans';font-size:12.46px;color:#3b3a39;transform:scaleX(0.8994);">Quick Format</div>
<div class="t" style="left:852.80px;top:143px;font-family:'Liberation Sans';font-size:12.46px;color:#a6a6a6;transform:scaleX(0.9457);">Conditional</div>
<div class="t" style="left:848.77px;top:160px;font-family:'Liberation Sans';font-size:12.46px;color:#a6a6a6;transform:scaleX(0.9336);">Formatting</div>
<div class="t" style="left:922.80px;top:143px;font-family:'Liberation Sans';font-size:12.46px;color:#3b3a39;transform:scaleX(0.8730);">Totals</div>
<div class="t" style="left:959.50px;top:143px;font-family:'Liberation Sans';font-size:12.46px;color:#3b3a39;transform:scaleX(0.8973);">Top n</div>
<div class="t" style="left:994.41px;top:143px;font-family:'Liberation Sans';font-size:12.46px;color:#a6a6a6;transform:scaleX(0.8933);">Explorer</div>
<div class="t" style="left:1083.90px;top:142px;font-family:'Liberation Sans';font-size:12.03px;color:#3b3a39;transform:scaleX(0.9337);">Notes</div>
<div class="t" style="left:1157.90px;top:124px;font-family:'Liberation Sans';font-size:13.04px;color:#3b3a39;transform:scaleX(0.8434);">Templates</div>
<div class="t" style="left:1157.14px;top:155px;font-family:'Liberation Sans';font-size:13.04px;color:#a6a6a6;transform:scaleX(0.8623);">Display</div>
<div class="t" style="left:181.20px;top:210px;font-family:'Liberation Mono';font-size:12.12px;color:#474747;transform:scaleX(0.8681);">Sales Projections Input Sheet</div>
<div class="t" style="left:185.00px;top:269px;font-family:'Liberation Mono';font-size:12.12px;color:#474747;transform:scaleX(0.8664);">Air Conditioners</div>
<div class="t" style="left:185.00px;top:293px;font-family:'Liberation Mono';font-size:12.12px;color:#474747;transform:scaleX(0.8660);">Coffee Machines</div>
<div class="t" style="left:185.00px;top:318px;font-family:'Liberation Mono';font-size:12.12px;color:#474747;transform:scaleX(0.8678);">Computers Accessories</div>
<div class="t" style="left:185.00px;top:343px;font-family:'Liberation Mono';font-size:12.12px;color:#474747;transform:scaleX(0.8602);">Desktops</div>
<div class="t" style="left:184.12px;top:368px;font-family:'Liberation Mono';font-size:12.12px;color:#474747;transform:scaleX(0.8784);">Fans</div>
<div class="t" style="left:184.12px;top:393px;font-family:'Liberation Mono';font-size:12.12px;color:#474747;transform:scaleX(0.8772);">Lamps</div>
<div class="t" style="left:184.12px;top:418px;font-family:'Liberation Mono';font-size:12.12px;color:#474747;transform:scaleX(0.8758);">Laptops</div>
<div class="t" style="left:185.00px;top:443px;font-family:'Liberation Mono';font-size:12.12px;color:#474747;transform:scaleX(0.8627);">Microwaves</div>
<div class="t" style="left:185.00px;top:467px;font-family:'Liberation Mono';font-size:12.12px;color:#474747;transform:scaleX(0.8602);">Monitors</div>
<div class="t" style="left:185.00px;top:492px;font-family:'Liberation Mono';font-size:12.12px;color:#474747;transform:scaleX(0.8684);">Printers, Scanners &amp; Fax</div>
<div class="t" style="left:185.00px;top:517px;font-family:'Liberation Mono';font-size:12.12px;color:#474747;transform:scaleX(0.8676);">Projectors &amp; Screens</div>
<div class="t" style="left:185.00px;top:542px;font-family:'Liberation Mono';font-size:12.12px;color:#474747;transform:scaleX(0.8650);">Refrigerators</div>
<div class="t" style="left:185.00px;top:567px;font-family:'Liberation Mono';font-size:12.12px;color:#474747;transform:scaleX(0.8664);">Washers &amp; Dryers</div>
<div class="t" style="left:185.00px;top:592px;font-family:'Liberation Mono';font-size:12.12px;color:#474747;transform:scaleX(0.8650);">Water Heaters</div>
<div class="t" style="left:461.60px;top:246px;font-family:'Liberation Mono';font-size:12.12px;color:#474747;transform:scaleX(0.8617);">Projected Sales</div>
<div class="t" style="left:572.80px;top:246px;font-family:'Liberation Mono';font-size:12.12px;color:#474747;transform:scaleX(0.8638);">Confidence Level</div>
<div class="t" style="left:745.40px;top:246px;font-family:'Liberation Mono';font-size:12.12px;color:#474747;transform:scaleX(0.8617);">Validation Date</div>
<div class="t" style="left:856.00px;top:246px;font-family:'Liberation Mono';font-size:12.12px;color:#474747;transform:scaleX(0.8675);">Comments</div>
<div class="t" style="left:167.30px;top:735px;font-family:'Liberation Sans';font-size:13.33px;color:#323130;transform:scaleX(0.8428);">Total rows: 15</div>
<div class="t" style="left:700.47px;top:735px;font-family:'Liberation Sans';font-size:13.33px;color:#323130;transform:scaleX(0.8326);">Rows per page:</div>
<div class="t" style="left:793.50px;top:736px;font-family:'Liberation Sans';font-size:13.04px;color:#323130;transform:scaleX(0.9036);">Auto</div>
<div class="t" style="left:1120.72px;top:737px;font-family:'Liberation Sans';font-size:13.04px;color:#323130;transform:scaleX(0.8796);">100%</div>
<div class="t" style="left:1203.86px;top:735px;font-family:'Liberation Sans';font-size:13.33px;color:#323130;transform:scaleX(0.8442);">14 records</div>
<div class="t" style="left:1295.04px;top:735px;font-family:'Liberation Sans';font-size:13.33px;color:#323130;transform:scaleX(0.8582);">Page 1 of 1</div>
<div class="t" style="left:1323.40px;top:8px;font-family:'Liberation Sans';font-size:8.99px;color:#252423;font-weight:bold;transform:scaleX(0.6800);">1</div>
<div class="t" style="left:1471.00px;top:763px;font-family:'Liberation Sans';font-size:9.86px;color:#605e5c;transform:scaleX(0.9047);">120%</div>
</body></html>
